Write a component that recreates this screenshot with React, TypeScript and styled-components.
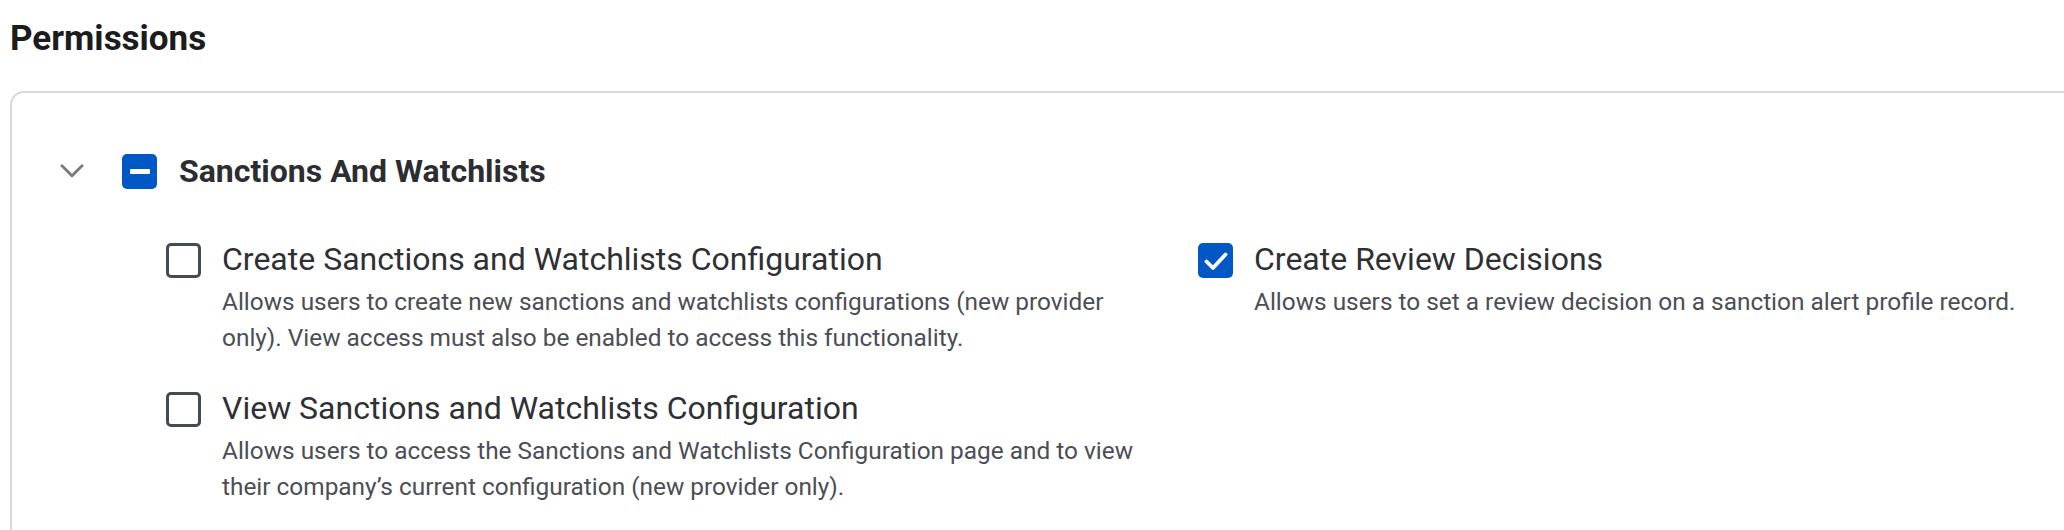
import React from "react";
import styled, { createGlobalStyle } from "styled-components";

const GlobalStyle = createGlobalStyle`
  html, body {
    margin: 0;
    padding: 0;
    background: #ffffff;
    overflow: hidden;
  }
  body {
    font-family: Roboto, "Noto Sans", "Liberation Sans", Arial, sans-serif;
    -webkit-font-smoothing: antialiased;
  }
`;

const Page = styled.div`
  padding: 18px 0 0 10px;
  width: 2064px;
  height: 530px;
  box-sizing: border-box;
  overflow: hidden;
`;

const Title = styled.h1`
  margin: 0;
  font-size: 35px;
  line-height: 42px;
  font-weight: 700;
  color: #1c1c1f;
`;

const Card = styled.section`
  margin-top: 31px;
  margin-right: -60px;
  border: 2px solid #d9d9d9;
  border-radius: 14px;
  padding: 60px 0 80px 48px;
  min-height: 500px;
`;

const GroupHeader = styled.div`
  display: flex;
  align-items: center;
  height: 36px;
`;

const ChevronButton = styled.button`
  display: flex;
  align-items: center;
  justify-content: center;
  width: 24px;
  height: 36px;
  padding: 0;
  margin: 0 38px 0 0;
  border: none;
  background: transparent;
  cursor: pointer;
`;

const Box = styled.span<{ $state: "checked" | "mixed" | "empty" }>`
  flex: 0 0 auto;
  display: flex;
  align-items: center;
  justify-content: center;
  width: 35px;
  height: 35px;
  box-sizing: border-box;
  border-radius: 5px;
  background: ${(p) => (p.$state === "empty" ? "#ffffff" : "#0058c6")};
  border: ${(p) => (p.$state === "empty" ? "3px solid #464b53" : "none")};
`;

const MinusBar = styled.span`
  display: block;
  width: 20px;
  height: 5px;
  border-radius: 1px;
  background: #ffffff;
`;

const GroupTitle = styled.span`
  margin-left: 22px;
  font-size: 32px;
  line-height: 36px;
  font-weight: 700;
  color: #2c2d31;
`;

const Grid = styled.div`
  display: grid;
  grid-template-columns: 984px 984px;
  column-gap: 48px;
  margin: 50px 0 0 106px;
  align-items: start;
`;

const Column = styled.div`
  display: flex;
  flex-direction: column;
  gap: 32px;
`;

const Item = styled.label`
  display: flex;
  align-items: flex-start;
  gap: 21px;
  cursor: pointer;

  & > ${Box} {
    margin-top: 4px;
  }
`;

const ItemText = styled.div`
  display: flex;
  flex-direction: column;
  gap: 5px;
  max-width: 928px;
`;

const ItemLabel = styled.span`
  font-size: 32px;
  line-height: 40px;
  font-weight: 400;
  color: #2f3034;
`;

const ItemDesc = styled.span`
  font-size: 24.4px;
  line-height: 36px;
  font-weight: 400;
  color: #4b4e55;
`;

type Perm = { label: string; desc: string; checked: boolean };

const left: Perm[] = [
  {
    label: "Create Sanctions and Watchlists Configuration",
    desc: "Allows users to create new sanctions and watchlists configurations (new provider only). View access must also be enabled to access this functionality.",
    checked: false,
  },
  {
    label: "View Sanctions and Watchlists Configuration",
    desc: "Allows users to access the Sanctions and Watchlists Configuration page and to view their company\u2019s current configuration (new provider only).",
    checked: false,
  },
];

const right: Perm[] = [
  {
    label: "Create Review Decisions",
    desc: "Allows users to set a review decision on a sanction alert profile record.",
    checked: true,
  },
];

const CheckMark = () => (
  <svg width="26" height="22" viewBox="0 0 26 22" fill="none">
    <polyline
      points="3.5,11.5 10,18 22.5,4.5"
      stroke="#ffffff"
      strokeWidth="3.8"
      strokeLinecap="round"
      strokeLinejoin="round"
    />
  </svg>
);

const Chevron = () => (
  <svg width="25" height="16" viewBox="0 0 25 16" fill="none">
    <polyline
      points="2,2.5 12.5,13 23,2.5"
      stroke="#7a7a7a"
      strokeWidth="3"
      strokeLinecap="round"
      strokeLinejoin="round"
    />
  </svg>
);

const PermItem = ({ p }: { p: Perm }) => (
  <Item>
    <Box $state={p.checked ? "checked" : "empty"}>{p.checked && <CheckMark />}</Box>
    <ItemText>
      <ItemLabel>{p.label}</ItemLabel>
      <ItemDesc>{p.desc}</ItemDesc>
    </ItemText>
  </Item>
);

export default function App() {
  return (
    <>
      <GlobalStyle />
      <Page>
        <Title>Permissions</Title>
        <Card>
          <GroupHeader>
            <ChevronButton aria-label="Collapse">
              <Chevron />
            </ChevronButton>
            <Box $state="mixed">
              <MinusBar />
            </Box>
            <GroupTitle>Sanctions And Watchlists</GroupTitle>
          </GroupHeader>
          <Grid>
            <Column>
              {left.map((p) => (
                <PermItem key={p.label} p={p} />
              ))}
            </Column>
            <Column>
              {right.map((p) => (
                <PermItem key={p.label} p={p} />
              ))}
            </Column>
          </Grid>
        </Card>
      </Page>
    </>
  );
}
